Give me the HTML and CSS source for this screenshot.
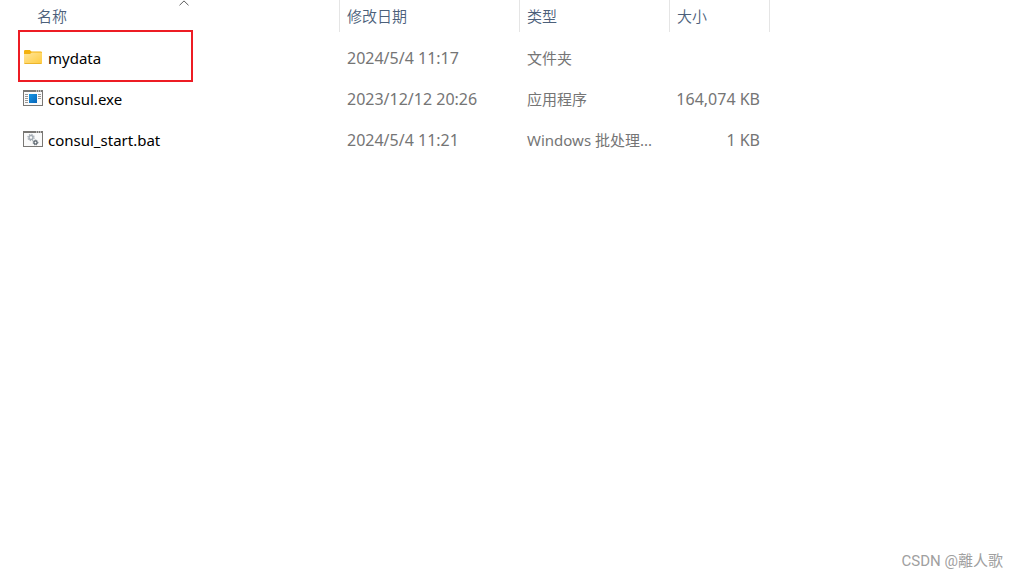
FILE: index.html
```html
<!DOCTYPE html>
<html lang="zh-CN">
<head>
  <meta charset="UTF-8" />
  <meta name="viewport" content="width=device-width, initial-scale=1.0"/>
  <title>consul</title>
  <link rel="stylesheet" href="styles.css">
</head>
<body>

  <main class="explorer">
    <table class="files">
      <colgroup>
        <col class="col-name">
        <col class="col-date">
        <col class="col-type">
        <col class="col-size">
      </colgroup>
      <thead>
        <tr>
          <th class="sorted" aria-sort="ascending">名称
            <svg class="caret" width="10" height="6" viewBox="0 0 10 6"><path d="M.5 5.3 5 .9l4.5 4.4" fill="none" stroke="#5c5c5c"/></svg>
          </th>
          <th>修改日期</th>
          <th>类型</th>
          <th>大小</th>
        </tr>
      </thead>
      <tbody>
        <tr>
          <td>
            <div class="file">
              <svg class="icon" width="20" height="18" viewBox="0 0 20 18">
                <defs>
                  <linearGradient id="folder" x1="0" y1="0" x2="1" y2="1">
                    <stop offset="0" stop-color="#ffe69c"/>
                    <stop offset="1" stop-color="#ffcb3d"/>
                  </linearGradient>
                </defs>
                <path d="M1 3.200q0-1.200 1.200-1.200h4.600l1.700 1.500h9.300q1.200 0 1.200 1.200V8H1z" fill="#f3b20d"/>
                <path d="M1 6h6l1.700-1.500H18q1 0 1 1v9.300q0 1.200-1.200 1.200H2.200Q1 16 1 14.800z" fill="url(#folder)"/>
                <path d="M1.500 15.500h17" stroke="#ecb52c"/>
              </svg>
              <span>mydata</span>
            </div>
          </td>
          <td class="date">2024/5/4 11:17</td>
          <td>文件夹</td>
          <td class="size"></td>
        </tr>
        <tr>
          <td>
            <div class="file">
              <svg class="icon" width="20" height="18" viewBox="0 0 20 18">
                <defs>
                  <linearGradient id="app" x1="0" y1="0" x2="1" y2="1">
                    <stop offset="0" stop-color="#1597e5"/>
                    <stop offset="1" stop-color="#0764b8"/>
                  </linearGradient>
                </defs>
                <path d="M0 1h20v16H0z" fill="#797774"/>
                <path d="M1 3h18v13H1z" fill="#fafafa"/>
                <path d="M13 2h1m1 0h1m1 0h1" stroke="#fff"/>
                <path d="M2 5.500h3m-3 2h3m-3 2h3m-3 2h3m-3 2h3M15 5.500h3m-3 2h3m-3 2h3" stroke="#9a9896"/>
                <path d="M6 5h8v9H6z" fill="url(#app)"/>
              </svg>
              <span>consul.exe</span>
            </div>
          </td>
          <td class="date">2023/12/12 20:26</td>
          <td>应用程序</td>
          <td class="size">164,074 KB</td>
        </tr>
        <tr>
          <td>
            <div class="file">
              <svg class="icon" width="20" height="18" viewBox="0 0 20 18">
                <path d="M0 1h20v16H0z" fill="#797774"/>
                <path d="M1 3h18v13H1z" fill="#fafafa"/>
                <path d="M13 2h1m1 0h1m1 0h1" stroke="#fff"/>
                <circle cx="8" cy="7.500" r="2" fill="none" stroke="#a3abb3" stroke-width="1.400"/>
                <circle cx="8" cy="7.500" r="3.100" fill="none" stroke="#a3abb3" stroke-width="1.200" stroke-dasharray="1.220 1.220"/>
                <circle cx="12.500" cy="12.500" r="1.600" fill="none" stroke="#59636c" stroke-width="1.300"/>
                <circle cx="12.500" cy="12.500" r="2.400" fill="none" stroke="#59636c" stroke-dasharray=".94 .94"/>
              </svg>
              <span>consul_start.bat</span>
            </div>
          </td>
          <td class="date">2024/5/4 11:21</td>
          <td>Windows 批处理...</td>
          <td class="size">1 KB</td>
        </tr>
      </tbody>
    </table>
    <div class="highlight"></div>
  </main>

  <footer class="watermark">CSDN @離人歌</footer>

</body>
</html>
```

FILE: styles.css
```css
body {
  margin: 0;
  min-height: 100vh;
  display: flex;
  flex-direction: column;
  background-color: #fff;
  font-family: "Noto Sans", "Noto Sans CJK SC", sans-serif;
  font-size: 15px;
  line-height: 20px;
  color: #757575;
}
.explorer {
  position: relative;
  flex: 1;
}
.files {
  width: 770px;
  table-layout: fixed;
  border-collapse: separate;
  border-spacing: 0;
}
.col-name {
  width: 340px;
}
.col-date {
  width: 180px;
}
.col-type {
  width: 150px;
}
.col-size {
  width: 100px;
}
.files th {
  height: 32px;
  box-sizing: border-box;
  padding: 0 7px;
  border-right: 1px solid #e5e5e5;
  color: #4c607a;
  font-weight: 350;
  text-align: left;
}
.files .sorted {
  position: relative;
  padding-left: 37px;
}
.caret {
  position: absolute;
  top: 0;
  left: 179px;
}
.files tbody::before {
  content: "";
  display: block;
  height: 5px;
}
.files td {
  height: 41px;
  box-sizing: border-box;
  padding: 0 7px;
  white-space: nowrap;
}
.file {
  display: flex;
  align-items: center;
  gap: 5px;
  padding-left: 16px;
  color: #000;
}
.icon {
  margin-bottom: 2px;
}
.files .date,
.files .size {
  font-size: 16px;
}
.files .size {
  padding-right: 10px;
  padding-left: 0;
  text-align: right;
}

/* red frame round the data folder */
.highlight {
  position: absolute;
  top: 30px;
  left: 18px;
  width: 175px;
  height: 52px;
  box-sizing: border-box;
  border: 2px solid #ed1c24;
  pointer-events: none;
}
.watermark {
  padding: 0 15px 7px;
  font-family: Roboto, "Noto Sans CJK TC", sans-serif;
  color: #a0a0a0;
  text-align: right;
}
```
